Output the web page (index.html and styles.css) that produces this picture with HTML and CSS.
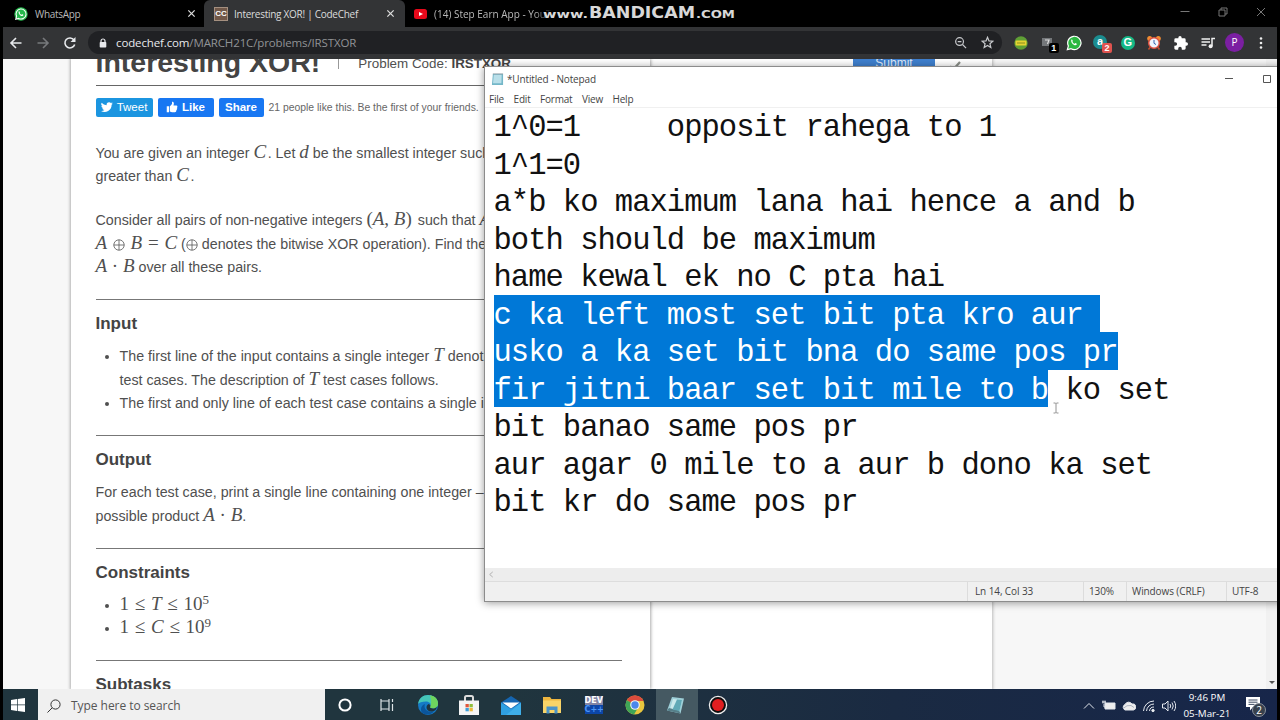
FILE: index.html
```html
<!DOCTYPE html>
<html lang="en">
<head>
  <meta charset="UTF-8">
  <title>Interesting XOR! | CodeChef</title>
  <link rel="stylesheet" href="styles.css">
</head>
<body>
  <div class="screen">

    <!-- browser tabs -->
    <div class="tabs">
      <div class="tab">
        <svg class="fav" viewBox="0 0 24 24"><circle cx="12" cy="12" r="11.5" fill="#25b84c"/><path d="M3 21l1.5-5A8.6 8.6 0 1 1 8 19.6z" fill="none" stroke="#fff" stroke-width="1.8"/><path d="M8 7.5c1-1 1.6.2 2 1.6s-.7 1 0 2 1.5 1.8 2.5 2.2 1-1.3 2-.8 2.3 1 1.3 2.2c-2.3 2.7-9.3-2.7-7.8-7.2z" fill="#fff"/></svg>
        <span class="tab-title t-wa">WhatsApp</span>
        <svg class="close" viewBox="0 0 10 10"><path d="M1.5 1.5l7 7M8.5 1.5l-7 7"/></svg>
      </div>
      <div class="tab active">
        <span class="cc">CC</span>
        <span class="tab-title t-cc">Interesting XOR! | CodeChef</span>
        <svg class="close" viewBox="0 0 10 10"><path d="M1.5 1.5l7 7M8.5 1.5l-7 7"/></svg>
      </div>
      <div class="tab">
        <svg class="yt" viewBox="0 0 13 10"><rect width="13" height="10" rx="2.5" fill="#e8091b"/><path d="M5 3l4 2-4 2z" fill="#fff"/></svg>
        <span class="tab-title t-yt">(14) Step Earn App - YouTube</span>
      </div>
      <div class="win-buttons">
        <svg viewBox="0 0 10 10"><path d="M.5 4.5h9"/></svg>
        <svg viewBox="0 0 10 10"><path d="M1 3h6v6H1zM3 3V1h6v6H7"/></svg>
        <svg viewBox="0 0 10 10"><path d="M1 1l8 8M9 1l-8 8"/></svg>
      </div>
    </div>

    <div class="toolbar">
      <div class="nav">
        <svg viewBox="0 0 14 14"><path d="M12.5 7H2M7 2L2 7l5 5"/></svg>
        <svg class="dim" viewBox="0 0 14 14"><path d="M1.5 7H12M7 2l5 5-5 5"/></svg>
        <svg viewBox="0 0 14 14"><path d="M11.7 8.5A5 5 0 1 1 11 4"/><path d="M12.5 1v5h-5z" class="solid"/></svg>
      </div>
      <div class="omnibox">
        <svg class="lock" viewBox="0 0 8 10"><path d="M2 5V3a2 2 0 0 1 4 0v2" fill="none" stroke="#e8eaed" stroke-width="1.2"/><rect x=".7" y="4" width="6.6" height="5.5" rx=".8" fill="#e8eaed"/></svg>
        <span class="url"><b>codechef.com</b>/MARCH21C/problems/IRSTXOR</span>
        <svg class="box-icon" viewBox="0 0 14 14"><circle cx="6" cy="6" r="4.2"/><path d="M9.2 9.2l3.8 3.8M4 6h4"/></svg>
        <svg class="box-icon" viewBox="0 0 14 14"><path d="M7 1.4l1.6 3.9 4.2.3-3.2 2.7 1 4.1L7 10.2l-3.6 2.2 1-4.1L1.2 5.6l4.2-.3z"/></svg>
      </div>
      <div class="extensions">
        <svg viewBox="0 0 16 16"><circle cx="8" cy="8" r="6.7" fill="#5f9f35"/><rect x="2.5" y="5.5" width="11" height="5" rx="1" fill="#e5d331"/><path d="M4 8h8" stroke="#8a8f20" stroke-width="1"/></svg>
        <span class="ext"><svg viewBox="0 0 16 16"><rect x="2" y="3" width="10" height="8" fill="#74777a"/><path d="M5 5h4L7.5 9" stroke="#ddd" stroke-width="1.2" fill="none"/></svg><i class="badge dark">1</i></span>
        <svg viewBox="0 0 24 24"><path d="M2 22l1.6-5.6A10 10 0 1 1 7.6 20.6z" fill="#2bb741" stroke="#fff" stroke-width="1.8"/><path d="M8 7c1-1 1.7.2 2 1.7s-.7 1 0 2 1.6 1.9 2.7 2.3 1-1.3 2-.8 2.3 1 1.3 2.2C13.7 17.5 6.4 12 8 7z" fill="#fff"/></svg>
        <span class="ext"><span class="disc alexa">a</span><i class="badge red">2</i></span>
        <span class="disc grammar">G</span>
        <svg viewBox="0 0 16 16"><circle cx="3.7" cy="3.5" r="2.5" fill="#f28c32"/><circle cx="12.3" cy="3.5" r="2.5" fill="#f28c32"/><path d="M4 12.5l-1.5 2M12 12.5l1.5 2" stroke="#c44f2f" stroke-width="1.5"/><circle cx="8" cy="8" r="5.3" fill="#eef4fd" stroke="#df5140" stroke-width="1.5"/><path d="M8 5v3.3l2 1.2" stroke="#3462aa" fill="none"/></svg>
        <svg viewBox="0 0 24 24"><path d="M20 11h-1V7a2 2 0 0 0-2-2h-4V4a2.5 2.5 0 0 0-5 0v1H4a2 2 0 0 0-2 2v3.8h1.5a2.7 2.7 0 0 1 0 5.4H2V20c0 1.1.9 2 2 2h3.8v-1.5a2.7 2.7 0 0 1 5.4 0V22H17a2 2 0 0 0 2-2v-4h1a2.5 2.5 0 0 0 0-5z" fill="#fff"/></svg>
        <svg viewBox="0 0 16 16"><path d="M1.5 4h8.500M1.500 7h8.500M1.500 10h5M12 11V3.500h3" stroke="#f1f1f1" stroke-width="1.5" fill="none"/><circle cx="10.6" cy="11.3" r="2" fill="#f1f1f1"/></svg>
        <span class="avatar">P</span>
        <svg viewBox="0 0 16 16"><circle cx="8" cy="3.5" r="1.3" fill="#eee"/><circle cx="8" cy="8" r="1.3" fill="#eee"/><circle cx="8" cy="12.5" r="1.3" fill="#eee"/></svg>
      </div>
    </div>

    <!-- problem page -->
    <div class="page">
      <div class="sheet">
        <div class="problem">
          <div class="title-row">
            <h1>Interesting XOR!</h1>
            <span class="bar"></span>
            <span class="code">Problem Code: <b>IRSTXOR</b></span>
          </div>
          <div class="social">
            <span class="btn tweet"><svg viewBox="0 0 24 24"><path fill="#fff" d="M23.6 4.900c-.9.4-1.800.7-2.800.8a4.900 4.900 0 0 0 2.100-2.700c-.9.6-2 1-3.100 1.200a4.900 4.900 0 0 0-8.400 4.500A14 14 0 0 1 1.300 3.500a4.900 4.900 0 0 0 1.500 6.600c-.8 0-1.600-.2-2.200-.6a4.900 4.900 0 0 0 3.900 4.900c-.7.2-1.500.2-2.200.1a4.900 4.900 0 0 0 4.600 3.400A9.900 9.900 0 0 1 0 19.900a14 14 0 0 0 21.200-12.400c.9-.7 1.800-1.600 2.400-2.600z"/></svg>Tweet</span>
            <span class="btn like"><svg viewBox="0 0 16 16"><path fill="#fff" d="M1 7h3v8H1zM5 7.300L8 4V1.500C8 .5 10.500.6 10.500 3.300L10 6h4c1.500 0 1.500 1.800.7 2.300.7.7.5 1.700-.3 2.100.4.8.1 1.600-.6 2 .1 1.500-.7 2.600-2 2.600H8l-3-1z"/></svg>Like</span>
            <span class="btn share">Share</span>
            <span class="likes">21 people like this. Be the first of your friends.</span>
          </div>
          <p>You are given an integer <i class="c">C</i>. Let <i>d</i> be the smallest integer such that<br>greater than <i class="c">C</i>.</p>
          <p>Consider all pairs of non-negative integers <span class="math">(<i>A</i>, <i>B</i>)</span> <span class="such">such that</span> <i>A</i><br>
            <span class="math eq"><i>A</i> <svg class="oplus" viewBox="0 0 12 12"><circle cx="6" cy="6" r="5.2"/><path d="M6 .8v10.400M.8 6h10.400"/></svg> <i>B</i> = <i>C</i></span> (<svg class="oplus" viewBox="0 0 12 12"><circle cx="6" cy="6" r="5.2"/><path d="M6 .8v10.400M.8 6h10.400"/></svg> denotes the bitwise XOR operation). Find the<br>
            <span class="math"><i>A</i> · <i>B</i></span> over all these pairs.</p>
          <hr>
          <h3>Input</h3>
          <ul>
            <li>The first line of the input contains a single integer <i>T</i> denoting<br>test cases. The description of <i>T</i> test cases follows.</li>
            <li>The first and only line of each test case contains a single integer</li>
          </ul>
          <hr>
          <h3>Output</h3>
          <p class="out">For each test case, print a single line containing one integer – the<br>possible product <span class="math"><i>A</i> · <i>B</i></span>.</p>
          <hr>
          <h3>Constraints</h3>
          <ul>
            <li><span class="math con">1 ≤ <i>T</i> ≤ 10<sup>5</sup></span></li>
            <li><span class="math con">1 ≤ <i>C</i> ≤ 10<sup>9</sup></span></li>
          </ul>
          <hr>
          <h3>Subtasks</h3>
        </div>
        <div class="side">
          <span class="submit">Submit</span>
          <svg class="check" viewBox="0 0 14 10"><path d="M1 6l4 3 7-8" fill="none" stroke="#8b8f88" stroke-width="2.5"/></svg>
        </div>
      </div>
      <div class="scrollbar"><span></span></div>
    </div>

    <div class="taskbar">
      <span class="start"><svg viewBox="0 0 14 14"><path fill="#fff" d="M0 2l6-.9v5.500H0zM6.700 1L14 0v6.600H6.700zM0 7.300h6v5.600L0 12zM6.700 7.300H14V14l-7.300-1z"/></svg></span>
      <div class="search">
        <svg viewBox="0 0 14 14"><circle cx="8.5" cy="5.5" r="4.6"/><path d="M5.200 8.800L.5 13.500"/></svg>
        <span>Type here to search</span>
      </div>
      <div class="apps">
        <span><svg viewBox="0 0 20 20"><circle cx="10" cy="10" r="5.6" fill="none" stroke="#fff" stroke-width="2"/></svg></span>
        <span><svg viewBox="0 0 20 20"><path d="M4 4v2h8V4M4 16v-2h8v2M4 6.500v7M12 6.500v7M15.500 4v3M15.500 9v7" fill="none" stroke="#dfe5e8" stroke-width="1.2"/></svg></span>
        <span><svg viewBox="0 0 20 20"><circle cx="10" cy="10" r="10" fill="#157ac6"/><path d="M0 9C1 3 5 0 10 0c6 0 10 4 10 8.500 0 3.500-2.500 5-5 5-2 0-3.500-.7-2.800-1.700 1.800-3-1-5.300-4.200-5.300C4 6.500 1 7.700 0 9z" fill="#45c6b8"/><path d="M12 .3C17 1 20 4.500 20 8.500c0 3.500-2.500 5-5 5-2 0-3.500-.7-2.800-1.700C14 8 13 4 12 .3z" fill="#6ed65e"/><path d="M7 9c-2 5 3 9 9 7.500-3 3.500-9 4.500-12.500.5C2 13 4 10 7 9z" fill="#0b559b"/><path d="M12.200 11.800c-.7 1 .8 1.700 2.800 1.700 1.500 0 3-.6 4-1.800-.6 3-2.500 4.500-4.500 4.800-4 .5-6-1.800-6-4 0-1.400.7-2.700 2-3.500 1.500.3 2.300 1.500 1.700 2.800z" fill="#20343f"/></svg></span>
        <span><svg viewBox="0 0 20 20"><path d="M6 6V2.500Q6 1 7.500 1h5Q14 1 14 2.500V6" fill="none" stroke="#dcdcdc" stroke-width="2"/><path d="M0 5.500h20V20H0z" fill="#f4f4f4"/><path fill="#e2573b" d="M6.500 9h3.300v3.300H6.500z"/><path fill="#8ebd3b" d="M10.500 9h3.300v3.300h-3.300z"/><path fill="#3f9fd8" d="M6.500 13h3.300v3.300H6.500z"/><path fill="#edb83a" d="M10.500 13h3.300v3.300h-3.300z"/></svg></span>
        <span><svg viewBox="0 0 20 20"><path d="M0 7.500L10 1l10 6.500V19H0z" fill="#1565b0"/><path d="M0 7.500l10 6.700 10-6.700V20H0z" fill="#2fa0e2"/><path d="M1.500 7.500h17L10 13.500z" fill="#fff"/><path d="M20 8v12H5z" fill="#4bb9ef" opacity=".6"/></svg></span>
        <span><svg viewBox="0 0 20 20"><path d="M1 2h7l1.500 2H19v14H1z" fill="#eeb63f"/><path d="M1 5.500h18V18H1z" fill="#f8d468"/><path d="M4.500 18.500v-7h11v7h-3v-3.500h-5v3.500z" fill="#4b94c9"/></svg></span>
        <span class="dev"><b>DEV</b><i>C++</i></span>
        <span><svg viewBox="0 0 20 20"><circle cx="10" cy="10" r="9.5" fill="#e9c63e"/><path d="M10 10L1.800 5.200A9.500 9.500 0 0 1 18.600 6H10z" fill="#db4b3d"/><path d="M10 10L1.800 5.200A9.500 9.500 0 0 0 9 19.400l4.500-7.500z" fill="#3fa557"/><circle cx="10" cy="10" r="4.8" fill="#f5f5f5"/><circle cx="10" cy="10" r="3.7" fill="#4b87ec"/></svg></span>
        <span class="current"><svg viewBox="0 0 20 20"><path d="M6 2l12 1.500-3.500 15L1 15.500z" fill="#9fd0d8"/><path d="M7 4l9 1-2.500 11L4 14z" fill="#c9e9ec"/><path d="M1 15.500l2-2.500 10 2.500 1.500 3z" fill="#567f89"/><path d="M11 4.500l5 .5-2.500 11-7-1.500z" fill="#5fa9b6"/></svg></span>
        <span><svg viewBox="0 0 20 20"><circle cx="10" cy="10" r="8.6" fill="#100d0e" stroke="#eee" stroke-width="1.3"/><circle cx="10" cy="10" r="6" fill="#e01e20"/></svg></span>
      </div>
      <div class="tray">
        <svg viewBox="0 0 14 14"><path d="M2 9.500l5-5 5 5"/></svg>
        <svg viewBox="0 0 14 14"><path d="M3 4h10v6H3z" class="solid"/><path d="M0 3h4M1 1.500v3M3 1.500v3M2 5v3h1"/></svg>
        <svg viewBox="0 0 14 14"><path d="M3 11a3 3 0 0 1 0-5.500 4 4 0 0 1 7-.5 3 3 0 0 1 1.500 6z" class="solid"/><path d="M1 9.500q4-4 8-3l3 2" stroke="#aeb6c2"/></svg>
        <svg viewBox="0 0 14 14"><path d="M1.500 12A10.500 10.500 0 0 1 12 2M4.500 12A7.500 7.500 0 0 1 12 5M7.500 12A4.500 4.500 0 0 1 12 8"/><circle cx="11" cy="11.5" r="1.2" class="solid"/></svg>
        <svg viewBox="0 0 14 14"><path d="M.5 5v4H3l3 3V2L3 5zM8 5q1.500 2 0 4M10 3.500q2.500 3.500 0 7M12 2q3.500 5 0 10"/></svg>
      </div>
      <div class="clock">9:46 PM<br>05-Mar-21</div>
      <div class="action"><svg viewBox="0 0 14 14"><path d="M0 0h14v10H7l-3 3.500V10H0z" fill="#fff"/><path d="M2.500 3h9M2.500 5.200h9M2.500 7.400h6" stroke="#273750" stroke-width=".9"/></svg><i>2</i></div>
    </div>

    <div class="notepad">
      <div class="np-title">
        <svg class="np-icon" viewBox="0 0 14 14"><path d="M2 1h11v12H1z" fill="#74b7c8"/><path d="M3 2h8.500l-.3 9H2.200z" fill="#b9dfe9"/><path d="M2 1h11" stroke="#8d9da3"/></svg>
        <span>*Untitled - Notepad</span>
        <svg class="np-min" viewBox="0 0 10 10"><path d="M1 4.500h8"/></svg>
        <svg class="np-max" viewBox="0 0 10 10"><path d="M1.500 1.500h7v7h-7z"/></svg>
      </div>
      <div class="np-menu"><span>File</span><span>Edit</span><span>Format</span><span>View</span><span>Help</span></div>
<pre class="np-text">1^0=1     opposit rahega to 1
1^1=0
a*b ko maximum lana hai hence a and b
both should be maximum
hame kewal ek no C pta hai
<mark>c ka left most set bit pta kro aur </mark>
<mark>usko a ka set bit bna do same pos pr</mark>
<mark>fir jitni baar set bit mile to b</mark> ko set
bit banao same pos pr
aur agar 0 mile to a aur b dono ka set
bit kr do same pos pr</pre>
      <div class="np-scroll"><svg viewBox="0 0 6 8"><path d="M5 1L1.500 4 5 7"/></svg></div>
      <div class="np-status">
        <span class="s-pos">Ln 14, Col 33</span>
        <span class="s-zoom">130%</span>
        <span class="s-eol">Windows (CRLF)</span>
        <span class="s-enc">UTF-8</span>
      </div>
    </div>

    <svg class="cursor" viewBox="0 0 6 12"><path d="M.5 1h2l.5.5.5-.5h2M3 1.500v9M.5 11h2l.5-.5.5.5h2"/></svg>
    <svg class="watermark" viewBox="0 0 194 20">
      <text x="0" y="14" class="small" textLength="45" lengthAdjust="spacingAndGlyphs">www.</text>
      <text x="46" y="14" class="big" textLength="106" lengthAdjust="spacingAndGlyphs">BANDICAM</text>
      <text x="153" y="14" class="small" textLength="39" lengthAdjust="spacingAndGlyphs">.COM</text>
    </svg>
  </div>
</body>
</html>
```

FILE: styles.css
```css
* {
  box-sizing: border-box;
}
body {
  margin: 0;
  padding: 0 3px;
  background: #000;
  font-family: "Open Sans", "Noto Sans", sans-serif;
}
svg {
  display: block;
  flex: none;
}
.screen {
  position: relative;
  height: 720px;
  overflow: hidden;
  display: flex;
  flex-direction: column;
  white-space: nowrap;
}

/* tabs */
.tabs {
  height: 27px;
  display: flex;
  background: #000;
  color: #b9b9b9;
  font-size: 10px;
  flex: none;
}
.tab {
  width: 201px;
  display: flex;
  align-items: center;
  padding: 0 8px 0 11px;
}
.tab.active {
  background: #333436;
  border-radius: 6px 6px 0 0;
  color: #dcdcdc;
  padding: 0 10px 0 10px;
  width: 201px;
}
.tab-title {
  flex: 1;
  margin-left: 7px;
}
.t-wa {
  letter-spacing: -0.3px;
}
.t-cc {
  margin-left: 6px;
  letter-spacing: -0.27px;
}
.t-yt {
  -webkit-mask-image: linear-gradient(90deg, #000 100px, transparent 118px);
  mask-image: linear-gradient(90deg, #000 100px, transparent 118px);
}
.fav {
  width: 14px;
  height: 14px;
}
.yt {
  width: 13px;
  height: 10px;
  margin-left: -2px;
}
.cc {
  width: 14px;
  height: 14px;
  background: #715849;
  border: 1px solid #a59080;
  color: #fff;
  font: bold 8px/12px "Liberation Sans", sans-serif;
  text-align: center;
}
.close {
  width: 9px;
  height: 9px;
  stroke: #ddd;
  stroke-width: 1.4;
}
.win-buttons {
  margin-left: auto;
  display: flex;
  gap: 28px;
  padding: 7px 11px 0 0;
}
.win-buttons svg {
  width: 10px;
  height: 10px;
  fill: none;
  stroke: #777;
}

/* toolbar */
.toolbar {
  height: 32px;
  flex: none;
  display: flex;
  align-items: center;
  padding-bottom: 1px;
  background: #333436;
}
.nav {
  width: 85px;
  display: flex;
  gap: 13px;
  padding-left: 6px;
}
.nav svg {
  width: 14px;
  height: 14px;
  fill: none;
  stroke: #e8eaed;
  stroke-width: 1.6;
}
.nav .solid {
  fill: #e8eaed;
  stroke: none;
}
.nav .dim {
  stroke: #77797c;
}
.omnibox {
  width: 914px;
  height: 23px;
  border-radius: 12px;
  background: #202124;
  display: flex;
  align-items: center;
  padding: 0 8px 0 11px;
  color: #919396;
}
.lock {
  width: 8px;
  height: 10px;
}
.url {
  margin-left: 9px;
  margin-right: auto;
  font-size: 11.5px;
  letter-spacing: -0.13px;
}
.url b {
  font-weight: normal;
  color: #e8eaed;
}
.box-icon {
  width: 13px;
  height: 13px;
  margin-left: 14px;
  fill: none;
  stroke: #c8cacd;
  stroke-width: 1.3;
}
.extensions {
  display: flex;
  align-items: center;
  gap: 10.7px;
  padding-left: 11px;
}
.extensions > * {
  width: 16px;
  height: 16px;
  flex: none;
}
.ext {
  position: relative;
}
.disc {
  display: block;
  width: 14px;
  height: 14px;
  border-radius: 50%;
  color: #fff;
  text-align: center;
  font: bold 11px/13px "Liberation Sans", sans-serif;
}
.alexa {
  background: #1b8d90;
}
.extensions > .grammar {
  width: 14px;
  height: 14px;
  margin: 0 1px;
  background: #15b886;
}
.badge {
  position: absolute;
  left: 9px;
  top: 8px;
  width: 10px;
  height: 10px;
  border-radius: 2px;
  color: #fff;
  text-align: center;
  font: bold 9px/10px "Liberation Sans", sans-serif;
}
.badge.dark {
  background: #000;
}
.badge.red {
  background: #e0534f;
}
.extensions > .avatar {
  width: 19px;
  height: 19px;
  margin: 0 -1.5px;
  border-radius: 50%;
  background: #7b1fa2;
  color: #fff;
  font-size: 10px;
  line-height: 19px;
  text-align: center;
}

/* problem page */
.page {
  height: 630px;
  flex: none;
  display: flex;
  background: #f7f7f7;
  overflow: hidden;
  font-family: "Liberation Sans", Arial, sans-serif;
  color: #505050;
}
.sheet {
  width: 921px;
  height: 630px;
  margin-left: 68px;
  display: flex;
  background: #fff;
  box-shadow: 0 0 3px 1px #bbb;
}
.problem {
  width: 579px;
  padding: 0 29px 0 24.5px;
  overflow: hidden;
  box-shadow: 1px 0 3px #aaa;
}
.title-row {
  height: 39px;
  margin-top: -12px;
  display: flex;
  border-bottom: 1px solid #666;
  width: 526px;
}
h1 {
  margin: 0;
  font-size: 28.5px;
  line-height: 31px;
  color: #444;
}
.bar {
  width: 1px;
  height: 12px;
  margin: 10px 19px 0 18px;
  background: #999;
}
.code {
  font-size: 13.4px;
  line-height: 34px;
}
.code b {
  color: #444;
}
.social {
  display: flex;
  align-items: center;
  gap: 5px;
  margin-top: 11px;
  height: 20px;
  font-size: 11px;
}
.btn {
  height: 19px;
  border-radius: 2px;
  display: flex;
  align-items: center;
  justify-content: center;
  gap: 4px;
  color: #fff;
  font-size: 11.5px;
}
.btn svg {
  width: 12px;
  height: 12px;
}
.tweet {
  width: 57px;
  background: #1b95e0;
}
.like {
  width: 56px;
  background: #1877f2;
  font-weight: bold;
}
.share {
  width: 45px;
  background: #1877f2;
  font-weight: bold;
}
.likes {
  font-size: 10.4px;
  color: #666;
}
p {
  margin: 24.5px 0 20px;
  font-size: 14.25px;
  line-height: 23.7px;
}
p + p {
  margin: 20px 0 19px;
}
p.out {
  margin: 0;
}
i {
  font-style: normal;
}
p i, li i {
  font: italic 19px/16px "Liberation Serif", serif;
}
.c {
  padding-right: 1.5px;
}
.such {
  margin-left: 2px;
}
.math {
  font: 19px/16px "Liberation Serif", serif;
}
.eq {
  word-spacing: 1px;
}
.con {
  word-spacing: 1px;
}
.oplus {
  display: inline-block;
  width: 12px;
  height: 12px;
  vertical-align: -2px;
  fill: none;
  stroke: #555;
  stroke-width: 0.8;
}
sup {
  font-size: 13px;
  line-height: 0;
  vertical-align: 6px;
}
hr {
  height: 1px;
  margin: 19px 0 12px;
  border: 0;
  background: #777;
  width: 526px;
}
h3 {
  margin: 0 0 9px;
  font-size: 17px;
  line-height: 24px;
  color: #444;
}
ul {
  margin: 0;
  padding-left: 24px;
  font-size: 14.25px;
  line-height: 23.7px;
}
.side {
  flex: 1;
  display: flex;
  padding-left: 203px;
}
.submit {
  width: 82px;
  height: 14px;
  background: #3f80cf;
  color: #dfeaf8;
  font-size: 12px;
  line-height: 8px;
  text-align: center;
}
.check {
  width: 13px;
  height: 9px;
  margin: 2px 0 0 14px;
}
.scrollbar {
  width: 11px;
  margin-left: auto;
  background: #f1f1f1;
  display: flex;
  align-items: flex-end;
  justify-content: center;
  padding-bottom: 5px;
}
.scrollbar span {
  border: 3px solid transparent;
  border-top-color: #555;
  border-bottom: 0;
}

/* taskbar */
.taskbar {
  height: 31px;
  display: flex;
  align-items: stretch;
  background: linear-gradient(90deg, #20353e 40%, #1a2a42 70%, #17264a);
  color: #fff;
}
.start {
  width: 35px;
  padding: 9px 0 0 8px;
}
.start svg {
  width: 14px;
  height: 14px;
}
.search {
  width: 287px;
  background: #f0f0f0;
  color: #555;
  display: flex;
  align-items: center;
  padding: 2px 0 0 9px;
  font-size: 12px;
}
.search svg {
  width: 14px;
  height: 14px;
  margin-right: 10px;
  fill: none;
  stroke: #333;
}
.search span {
  letter-spacing: -0.05px;
}
.apps {
  display: flex;
  padding-left: 0;
}
.apps span {
  width: 41.4px;
  display: flex;
  align-items: center;
  justify-content: center;
  padding: 1px 1px 0 0;
}
.apps svg {
  width: 20px;
  height: 20px;
}
.apps .current {
  background: #455962;
}
.apps .dev {
  flex-direction: column;
  font: bold 8px/9px "DejaVu Sans", sans-serif;
}
.dev b {
  width: 18px;
  background: #8184a5;
  text-align: center;
}
.dev i {
  width: 18px;
  background: #0c46a8;
  color: #4c94f4;
  text-align: center;
}
.tray {
  margin-left: auto;
  display: flex;
  align-items: center;
  gap: 6px;
  padding-top: 2px;
}
.tray svg {
  width: 14px;
  height: 14px;
  fill: none;
  stroke: #e4e8ee;
}
.tray .solid {
  fill: #eee;
}
.clock {
  width: 62px;
  padding-top: 1px;
  text-align: center;
  font-size: 9.8px;
  line-height: 15.5px;
}
.action {
  position: relative;
  width: 39px;
  padding: 8px 0 0 8px;
}
.action svg {
  width: 14px;
  height: 14px;
}
.action i {
  position: absolute;
  left: 14px;
  top: 14px;
  width: 14px;
  height: 14px;
  border-radius: 50%;
  background: #37404c;
  border: 1px solid #8a929c;
  font-size: 10px;
  line-height: 12px;
  text-align: center;
}

/* notepad window */
.notepad {
  position: absolute;
  left: 481px;
  top: 66px;
  width: 810px;
  height: 536px;
  display: flex;
  flex-direction: column;
  background: #fff;
  border: 1px solid #8c8c8c;
  box-shadow: 0 1px 8px rgba(0, 0, 0, 0.4);
  color: #444;
}
.np-title {
  height: 24px;
  display: flex;
  align-items: center;
  padding-left: 6px;
  font-size: 10px;
}
.np-title span {
  margin-left: 3px;
  letter-spacing: -0.15px;
}
.np-icon {
  width: 13px;
  height: 13px;
}
.np-min, .np-max {
  width: 10px;
  height: 10px;
  fill: none;
  stroke: #555;
}
.np-min {
  margin-left: auto;
  margin-right: 28px;
}
.np-max {
  margin-right: 21px;
}
.np-menu {
  height: 17px;
  border-bottom: 1px solid #f0f0f0;
  display: flex;
  gap: 9.5px;
  padding-left: 4px;
  font-size: 10px;
  letter-spacing: -0.2px;
  line-height: 16px;
}
.np-text {
  flex: 1;
  margin: 0;
  padding: 2px 0 0 8.5px;
  font-family: "Liberation Mono", monospace;
  font-size: 30.5px;
  letter-spacing: -0.97px;
  line-height: 37.5px;
  color: #111;
}
mark {
  display: inline-block;
  height: 37.5px;
  margin: -3px 0 3px;
  line-height: 43.5px;
  vertical-align: top;
  background: #0078d7;
  color: #fff;
}
.np-scroll {
  height: 13px;
  background: #ededed;
  padding: 3px 0 0 3px;
}
.np-scroll svg {
  width: 6px;
  height: 7px;
  fill: none;
  stroke: #aaa;
}
.np-status {
  height: 20px;
  border-top: 1px solid #ddd;
  background: #f0f0f0;
  display: flex;
  padding-left: 482px;
  font-size: 10px;
  letter-spacing: -0.1px;
  line-height: 19px;
}
.np-status span {
  border-left: 1px solid #dcdcdc;
  padding-left: 5px;
}
.np-status .s-pos {
  width: 116px;
  padding-left: 7px;
}
.s-zoom {
  width: 43px;
}
.s-eol {
  width: 100px;
}

.cursor {
  position: absolute;
  left: 1050px;
  top: 402px;
  width: 6px;
  height: 12px;
  fill: none;
  stroke: #777;
  stroke-width: 0.8;
}

/* recorder watermark */
.watermark {
  position: absolute;
  left: 540px;
  top: 4px;
  width: 194px;
  height: 20px;
  fill: #d8d8d8;
  font-family: "DejaVu Sans", sans-serif;
  font-weight: bold;
}
.watermark .small {
  font-size: 11px;
}
.watermark .big {
  font-size: 15px;
}
```
